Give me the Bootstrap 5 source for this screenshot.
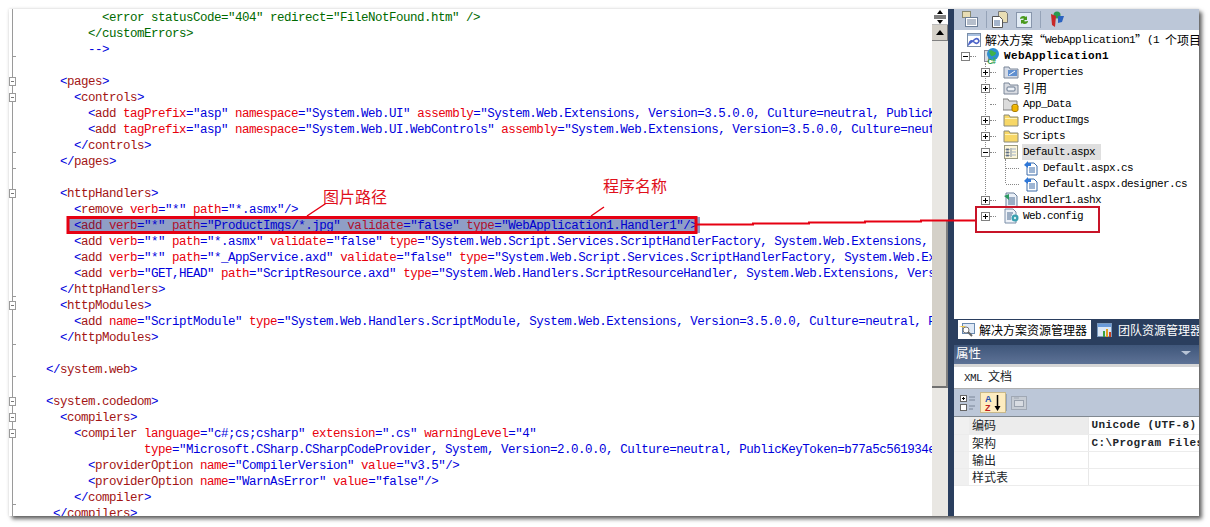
<!DOCTYPE html>
<html lang="zh"><head><meta charset="utf-8"><title>Web.config</title>
<link href="https://cdn.jsdelivr.net/npm/bootstrap@5.3.0/dist/css/bootstrap.min.css" rel="stylesheet">
<style>
html,body{background:#fff;overflow:hidden;height:527px}
.stage{position:relative;width:1210px;height:527px;padding:9px 0 0 9px}
.win{width:1190px;height:507px;background:#fff;box-shadow:3px 3px 4px rgba(0,0,0,.6),0 0 3px rgba(0,0,0,.15)}
.gut{width:9px;flex:none;background:linear-gradient(#9a9a9a,#9a9a9a) 3px 0/1px 100% no-repeat}
.gc{height:16px;display:flex;align-items:center}
.gc.tick{align-items:flex-end}
.gc.tick::after{content:"";width:4px;height:1px;background:#9a9a9a;margin-left:3px}
.gc.box::after{content:"";width:7px;height:9px;margin-left:0;border:1px solid #9a9a9a;background:linear-gradient(#777,#777) center/3px 1px no-repeat #fff}
.code{flex:1 1 0;min-width:0;overflow:hidden;font-family:"Liberation Mono",monospace;font-size:12.5px;letter-spacing:-.5px;color:#0000dc}
.cl{height:16px;line-height:18px;white-space:pre}
.tn{color:#a31515}.an{color:#e8000c}
.cmt,.cmt .tn,.cmt .an{color:#006a00}
.seltext{display:inline-block;height:16px;background:#8f9ec6;box-shadow:-5px 0 0 #8f9ec6,3px 0 0 #8f9ec6;color:#0000d0}
.seltext .an{color:#b0102c}.seltext .tn{color:#8c1030}
.sbar{width:16px;flex:none;background:#e9e7e3}
.sbar-split{height:16px;background:#fff;border-bottom:1px solid #bbb}
.sbar-up{height:16px;background:#d4d0c8;border-right:1px solid #808080;border-bottom:1px solid #808080}
.sbar-gap{height:179px}
.sbar-thumb{height:168px;background:#d4d0c8;border-right:2px solid #808080;border-bottom:2px solid #707070}
.vsplit{width:6px;flex:none;background:#2a3e5e}
.side{width:245px;flex:none;min-width:0;overflow:hidden}
.tbar{background:#bcc7d8}
.tbar-top{height:21px;gap:0}
.tsep{width:1px;height:17px;background:#95a3b8;flex:none}
.tree{position:relative;height:289px;padding-top:2px;background:#fff;overflow:hidden;font-family:"Liberation Mono",monospace;font-size:11px;letter-spacing:-.6px;color:#000}
.tr{height:16px;white-space:pre}
.tr>*{flex:none}
.l0{padding-left:12px}.l1{padding-left:7px}.l2{padding-left:27px}.l3{padding-left:52px}
.exp{width:9px;height:9px;flex:none;border:1px solid #808080;background:#fff;position:relative}
.exp::before{content:"";position:absolute;left:1px;top:3px;width:5px;height:1px;background:#000}
.exp.plus::after{content:"";position:absolute;left:3px;top:1px;width:1px;height:5px;background:#000}
.nox{width:9px;flex:none}
.dh{width:6px;flex:none;border-top:1px dotted #888}
.dh.long{width:13px}
.mr-3px{margin-right:3px}.mr-4px{margin-right:4px}.mr-7px{margin-right:7px}.mr-8px{margin-right:8px}
.dv{position:absolute;width:0;border-left:1px dotted #888}
.dv1{left:31px;top:33px;height:144px}
.dv2{left:51px;top:129px;height:24px}
.zh{font-family:"Noto Sans CJK SC",sans-serif;letter-spacing:0;font-size:12px}
.wordb{font-weight:700;letter-spacing:.4px}
.hilite{background:#dfdfdf;padding:0 6px 0 1px;margin-left:-1px;line-height:16px}
.tabstrip{height:26px;background:#2a3e5e;padding:1px 0 6px 4px;overflow:hidden;white-space:nowrap}
.tb-a{width:133px;background:#fff;flex:none;color:#000;padding-left:1px}
.tb-b{flex:none;color:#fff;padding-left:6px}
.tb-a svg,.tb-b svg{margin-right:4px;flex:none}
.tb-b svg{margin-right:5px}
.tb-a,.tb-b{font-family:"Noto Sans CJK SC",sans-serif;font-size:12px;line-height:19px}
.phead{height:19px;background:linear-gradient(#3f567a,#5d7296);color:#fff;font-family:"Noto Sans CJK SC",sans-serif;font-size:12.5px;line-height:18px;padding:0 8px 3px 2px}
.tridown{width:0;height:0;border-left:5px solid transparent;border-right:5px solid transparent;border-top:4px solid #b8c4d6}
.combo{height:25px;background:#fff;border-top:3px solid #d6d6d6;border-bottom:1px solid #b0b0b0;padding-left:10px;font-family:"Liberation Mono",monospace;font-size:11px;letter-spacing:-.6px;line-height:18px}
.tbar-p{height:28px;padding-left:6px;border-bottom:1px solid #808890}
.azbox{width:26px;height:21px;background:#fdecc0;border:1px solid #c9b98a;margin:0 0 0 4px}
.pgrid{width:245px;table-layout:fixed;margin:0;border-collapse:collapse}
.pgrid td{height:17px;padding:0;line-height:16px;vertical-align:top;border-bottom:1px solid #ececec;overflow:hidden;white-space:nowrap}
.pg-g{width:15px;background:#f0f0f0}
.pg-n{width:119px;padding-left:3px!important;font-family:"Noto Sans CJK SC",sans-serif;font-size:12px;border-right:1px solid #e8e8e8}
.pg-v{padding-left:3px!important;font-family:"Liberation Mono",monospace;font-size:11px;letter-spacing:.4px;font-weight:700}
.pg-sel{background:#ececec}
.over{position:absolute;left:0;top:0;pointer-events:none}
.note{position:absolute;color:#e0101c;font-family:"Noto Sans CJK SC",sans-serif;font-size:16px;line-height:20px}
.n1{left:323px;top:186px}.n2{left:603px;top:175px}
</style></head>
<body>
<svg class="d-none" xmlns="http://www.w3.org/2000/svg">
<symbol id="i-folder" viewBox="0 0 16 16"><path d="M1 3h5l1 2h8v9H1z" fill="#f7d766" stroke="#8a8a7a"/><path d="M2 6h12v1H2z" fill="#fff3b8"/></symbol>
<symbol id="i-prop" viewBox="0 0 16 16"><path d="M1 3h5l1 2h8v9H1z" fill="#d5dbe6" stroke="#7a8698"/><rect x="5" y="6" width="9" height="6" fill="#5f8fd0"/><path d="M6 11l6-4" stroke="#fff"/></symbol>
<symbol id="i-ref" viewBox="0 0 16 16"><path d="M1 3h5l1 2h8v9H1z" fill="#d9dce2" stroke="#7a8698"/><rect x="4" y="7" width="8" height="4" rx="1" fill="#eef2f8" stroke="#6a7a90"/></symbol>
<symbol id="i-data" viewBox="0 0 16 16"><path d="M0 3h5l1 2h8v9H0z" fill="#dcdcdc" stroke="#808080"/><ellipse cx="12" cy="10" rx="3" ry="1.6" fill="#f5c518" stroke="#a87b00"/><path d="M9 10v4c0 2 6 2 6 0v-4" fill="#f0b400" stroke="#a87b00"/></symbol>
<symbol id="i-aspx" viewBox="0 0 16 16"><rect x="1.500" y="1.500" width="13" height="13" fill="#fdf6d8" stroke="#9a9a80"/><path d="M3 5h3v1H3zM3 8h3v1H3zM3 11h3v1H3zM8 4v9" stroke="#7a8aa0"/><path d="M9 5h4M9 8h4M9 11h4" stroke="#9fb0c8"/></symbol>
<symbol id="i-cs" viewBox="0 0 16 16"><path d="M4 3h7l3 3v9H4z" fill="#fff" stroke="#3a6aa8"/><path d="M6 8h6M6 10h6M6 12h6" stroke="#3a6aa8"/><path d="M1 5l4-4v2h3v3H5v2z" fill="#2f78d8"/></symbol>
<symbol id="i-ashx" viewBox="0 0 16 16"><path d="M3 1h8l3 3v11H3z" fill="#eaf0f8" stroke="#6a7f9a"/><path d="M5 6h7M5 8h7M5 10h7M5 12h7" stroke="#4a6a90"/><path d="M1 4l5-2v6z" fill="#2a9a60"/></symbol>
<symbol id="i-cfg" viewBox="0 0 16 16"><path d="M2 1h8l3 3v11H2z" fill="#eef2f8" stroke="#7a8ea8"/><path d="M4 5h6M4 7h5M4 9h4M4 11h4" stroke="#4a6a90"/><circle cx="12" cy="10" r="3.500" fill="#3aa0b0"/><circle cx="12" cy="10" r="1.200" fill="#d5f0f0"/></symbol>
<symbol id="i-sol" viewBox="0 0 16 16"><rect x="1.500" y="1.500" width="13" height="13" fill="#fff" stroke="#7a8ea8"/><path d="M2 2h12v2H2z" fill="#a8c0e0"/><path d="M3 12c1-4 3-4 5-2s4 2 5-1c-1-3-3-3-5-1s-4 3-5 4z" fill="none" stroke="#4a62c8" stroke-width="1.600"/></symbol>
<symbol id="i-proj" viewBox="0 0 16 16"><rect x="0.500" y="2.500" width="4" height="11" fill="#d8dce2" stroke="#889"/><circle cx="9" cy="6" r="6" fill="#2e8fd0"/><path d="M5 3c3-2 4 1 6 1s1 3-2 4-3-3-4-5zM9 10c2-1 3 0 2 2" fill="#3fb24a"/><text x="3.500" y="15.500" font-family="Liberation Sans" font-size="7" font-weight="700" fill="#1a9a40">C#</text></symbol>
</svg>
<div class="stage">
 <div class="win d-flex">
  <div class="gut d-flex flex-column flex-none">
   <div class="gc"></div><div class="gc"></div><div class="gc tick"></div><div class="gc"></div>
   <div class="gc box"></div><div class="gc box"></div><div class="gc"></div><div class="gc"></div>
   <div class="gc tick"></div><div class="gc tick"></div><div class="gc"></div><div class="gc box"></div>
   <div class="gc"></div><div class="gc"></div><div class="gc"></div><div class="gc"></div>
   <div class="gc"></div><div class="gc tick"></div><div class="gc box"></div><div class="gc"></div>
   <div class="gc tick"></div><div class="gc"></div><div class="gc tick"></div><div class="gc"></div>
   <div class="gc box"></div><div class="gc box"></div><div class="gc box"></div><div class="gc"></div>
   <div class="gc"></div><div class="gc"></div><div class="gc tick"></div>
  </div>
  <div class="code">
<div class="cl cmt">            &lt;error statusCode="404" redirect="FileNotFound.htm" /&gt;</div>
<div class="cl cmt">          &lt;/customErrors&gt;</div>
<div class="cl">          --&gt;</div>
<div class="cl"></div>
<div class="cl">      &lt;<span class="tn">pages</span>&gt;</div>
<div class="cl">        &lt;<span class="tn">controls</span>&gt;</div>
<div class="cl">          &lt;<span class="tn">add</span> <span class="an">tagPrefix</span>="asp" <span class="an">namespace</span>="System.Web.UI" <span class="an">assembly</span>="System.Web.Extensions, Version=3.5.0.0, Culture=neutral, PublicK</div>
<div class="cl">          &lt;<span class="tn">add</span> <span class="an">tagPrefix</span>="asp" <span class="an">namespace</span>="System.Web.UI.WebControls" <span class="an">assembly</span>="System.Web.Extensions, Version=3.5.0.0, Culture=neut</div>
<div class="cl">        &lt;/<span class="tn">controls</span>&gt;</div>
<div class="cl">      &lt;/<span class="tn">pages</span>&gt;</div>
<div class="cl"></div>
<div class="cl">      &lt;<span class="tn">httpHandlers</span>&gt;</div>
<div class="cl">        &lt;<span class="tn">remove</span> <span class="an">verb</span>="*" <span class="an">path</span>="*.asmx"/&gt;</div>
<div class="cl">        <span class="seltext">&lt;<span class="tn">add</span> <span class="an">verb</span>="*" <span class="an">path</span>="ProductImgs/*.jpg" <span class="an">validate</span>="false" <span class="an">type</span>="WebApplication1.Handler1"/&gt;</span></div>
<div class="cl">        &lt;<span class="tn">add</span> <span class="an">verb</span>="*" <span class="an">path</span>="*.asmx" <span class="an">validate</span>="false" <span class="an">type</span>="System.Web.Script.Services.ScriptHandlerFactory, System.Web.Extensions, </div>
<div class="cl">        &lt;<span class="tn">add</span> <span class="an">verb</span>="*" <span class="an">path</span>="*_AppService.axd" <span class="an">validate</span>="false" <span class="an">type</span>="System.Web.Script.Services.ScriptHandlerFactory, System.Web.Ex</div>
<div class="cl">        &lt;<span class="tn">add</span> <span class="an">verb</span>="GET,HEAD" <span class="an">path</span>="ScriptResource.axd" <span class="an">type</span>="System.Web.Handlers.ScriptResourceHandler, System.Web.Extensions, Vers</div>
<div class="cl">      &lt;/<span class="tn">httpHandlers</span>&gt;</div>
<div class="cl">      &lt;<span class="tn">httpModules</span>&gt;</div>
<div class="cl">        &lt;<span class="tn">add</span> <span class="an">name</span>="ScriptModule" <span class="an">type</span>="System.Web.Handlers.ScriptModule, System.Web.Extensions, Version=3.5.0.0, Culture=neutral, P</div>
<div class="cl">      &lt;/<span class="tn">httpModules</span>&gt;</div>
<div class="cl"></div>
<div class="cl">    &lt;/<span class="tn">system.web</span>&gt;</div>
<div class="cl"></div>
<div class="cl">    &lt;<span class="tn">system.codedom</span>&gt;</div>
<div class="cl">      &lt;<span class="tn">compilers</span>&gt;</div>
<div class="cl">        &lt;<span class="tn">compiler</span> <span class="an">language</span>="c#;cs;csharp" <span class="an">extension</span>=".cs" <span class="an">warningLevel</span>="4"</div>
<div class="cl">                  <span class="an">type</span>="Microsoft.CSharp.CSharpCodeProvider, System, Version=2.0.0.0, Culture=neutral, PublicKeyToken=b77a5c561934e</div>
<div class="cl">          &lt;<span class="tn">providerOption</span> <span class="an">name</span>="CompilerVersion" <span class="an">value</span>="v3.5"/&gt;</div>
<div class="cl">          &lt;<span class="tn">providerOption</span> <span class="an">name</span>="WarnAsError" <span class="an">value</span>="false"/&gt;</div>
<div class="cl">        &lt;/<span class="tn">compiler</span>&gt;</div>
<div class="cl">     &lt;/<span class="tn">compilers</span>&gt;</div>
  </div>
  <div class="sbar d-flex flex-column">
   <div class="sbar-split d-flex align-items-center justify-content-center"><svg width="12" height="14" viewBox="0 0 12 14"><path d="M6 0L3 4h6zM6 14l-3-4h6z" fill="#000"/><path d="M0 6h12M0 8h12" stroke="#000"/></svg></div>
   <div class="sbar-up d-flex align-items-center justify-content-center"><svg width="8" height="5" viewBox="0 0 8 5"><path d="M4 0L0 5h8z" fill="#000"/></svg></div>
   <div class="sbar-gap"></div>
   <div class="sbar-thumb"></div>
  </div>
  <div class="vsplit"></div>
  <div class="side d-flex flex-column">
   <div class="tbar tbar-top d-flex align-items-center">
    <svg class="ms-2" width="16" height="17" viewBox="0 0 16 17"><rect x=".5" y=".5" width="8" height="6" fill="#e8ddb4" stroke="#8a8a70"/><rect x="3.500" y="6.500" width="12" height="9" fill="#fff" stroke="#6d7f98"/><path d="M5 9h9M5 11h9M5 13h9" stroke="#6d7f98"/></svg>
    <div class="tsep ms-2"></div>
    <svg class="ms-1" width="17" height="17" viewBox="0 0 17 17"><path d="M7.500.5h7l2 2v9h-9z" fill="#e8ddb4" stroke="#777"/><path d="M1.500 5.500h7l3 3v8h-10z" fill="#fff" stroke="#555"/><path d="M3 10h6M3 12h6M3 14h6" stroke="#4a6a98"/></svg>
    <svg class="ms-2" width="16" height="17" viewBox="0 0 16 17"><rect x=".5" y="1.500" width="15" height="15" fill="#e3ecf6" stroke="#8896ac"/><path d="M4 8c0-3 4-4 6-2l1-1v4H7l1-1c-1-1-3 0-4 0zM12 10c0 3-4 4-6 2l-1 1V9h4l-1 1c1 1 3 0 4 0z" fill="#4a9a1e"/></svg>
    <div class="tsep ms-2"></div>
    <svg class="ms-2" width="16" height="17" viewBox="0 0 16 17"><circle cx="8" cy="4" r="3.500" fill="#2a9a50"/><path d="M2 3l5 2-1 11-3-2z" fill="#c82828"/><path d="M9 5l6 0-2 6-4 1z" fill="#2a62c0"/></svg>
   </div>
   <div class="tree">
    <span class="dv dv1"></span><span class="dv dv2"></span>
    <div class="tr l0 d-flex align-items-center"><svg class="mr-3px" width="16" height="16"><use href="#i-sol"/></svg><span class="zh">解决方案“</span><span>WebApplication1</span><span class="zh">”</span><span>(1 </span><span class="zh">个项目</span></div>
    <div class="tr l1 d-flex align-items-center"><span class="exp"></span><span class="dh mr-8px"></span><svg class="mr-4px" width="16" height="16"><use href="#i-proj"/></svg><span class="wordb">WebApplication1</span></div>
    <div class="tr l2 d-flex align-items-center"><span class="exp plus"></span><span class="dh mr-7px"></span><svg class="mr-4px" width="16" height="16"><use href="#i-prop"/></svg><span>Properties</span></div>
    <div class="tr l2 d-flex align-items-center"><span class="exp plus"></span><span class="dh mr-7px"></span><svg class="mr-4px" width="16" height="16"><use href="#i-ref"/></svg><span class="zh">引用</span></div>
    <div class="tr l2 d-flex align-items-center"><span class="nox"></span><span class="dh mr-7px"></span><svg class="mr-4px" width="16" height="16"><use href="#i-data"/></svg><span>App_Data</span></div>
    <div class="tr l2 d-flex align-items-center"><span class="exp plus"></span><span class="dh mr-7px"></span><svg class="mr-4px" width="16" height="16"><use href="#i-folder"/></svg><span>ProductImgs</span></div>
    <div class="tr l2 d-flex align-items-center"><span class="exp plus"></span><span class="dh mr-7px"></span><svg class="mr-4px" width="16" height="16"><use href="#i-folder"/></svg><span>Scripts</span></div>
    <div class="tr l2 d-flex align-items-center"><span class="exp"></span><span class="dh mr-7px"></span><svg class="mr-4px" width="16" height="16"><use href="#i-aspx"/></svg><span class="hilite">Default.aspx</span></div>
    <div class="tr l3 d-flex align-items-center"><span class="dh long mr-4px"></span><svg class="mr-4px" width="16" height="16"><use href="#i-cs"/></svg><span>Default.aspx.cs</span></div>
    <div class="tr l3 d-flex align-items-center"><span class="dh long mr-4px"></span><svg class="mr-4px" width="16" height="16"><use href="#i-cs"/></svg><span>Default.aspx.designer.cs</span></div>
    <div class="tr l2 d-flex align-items-center"><span class="exp plus"></span><span class="dh mr-7px"></span><svg class="mr-4px" width="16" height="16"><use href="#i-ashx"/></svg><span>Handler1.ashx</span></div>
    <div class="tr l2 d-flex align-items-center"><span class="exp plus"></span><span class="dh mr-7px"></span><svg class="mr-4px" width="16" height="16"><use href="#i-cfg"/></svg><span>Web.config</span></div>
   </div>
   <div class="tabstrip d-flex">
    <div class="tb-a d-flex align-items-center"><svg width="16" height="16" viewBox="0 0 16 16"><rect x="3.500" y="1.500" width="12" height="10" fill="#dfe9f6" stroke="#6a8ab0"/><path d="M0 4h6l1 2H5z" fill="#f0c850"/><circle cx="7" cy="8" r="3" fill="#fff" stroke="#777"/><path d="M9 10l4 4" stroke="#666" stroke-width="2"/></svg><span>解决方案资源管理器</span></div>
    <div class="tb-b d-flex align-items-center"><svg width="16" height="16" viewBox="0 0 16 16"><rect x=".5" y="1.500" width="14" height="13" fill="#dce8f6" stroke="#7a9ac0"/><path d="M1 2h13v3H1z" fill="#6a9ad8"/><path d="M6 9h2v6H6z" fill="#3aa040"/><path d="M9 7h2v8H9z" fill="#e0a020"/><path d="M12 10h2v5h-2z" fill="#c84020"/></svg><span>团队资源管理器</span></div>
   </div>
   <div class="phead d-flex align-items-center justify-content-between"><span>属性</span><span class="tridown"></span></div>
   <div class="combo">XML <span class="zh">文档</span></div>
   <div class="tbar tbar-p d-flex align-items-center">
    <svg width="16" height="18" viewBox="0 0 16 18"><rect x=".5" y="1.500" width="6" height="6" fill="#fff" stroke="#666"/><path d="M2 4.500h3M3.500 3v3M2 13.500h3M3.500 12v3" stroke="#000"/><rect x=".5" y="10.500" width="6" height="6" fill="#fff" stroke="#666"/><path d="M9 3h6M9 6h6M9 12h6M9 15h4" stroke="#7a8698"/></svg>
    <div class="azbox d-flex align-items-center justify-content-center"><svg width="20" height="18" viewBox="0 0 20 18"><text x="2" y="8" font-family="Liberation Sans" font-size="9" font-weight="700" fill="#1f4fb0">A</text><text x="2" y="17" font-family="Liberation Sans" font-size="9" font-weight="700" fill="#c02020">Z</text><path d="M14.500 1v13" stroke="#000" stroke-width="1.500"/><path d="M11.500 12h6l-3 5z" fill="#000"/></svg></div>
    <div class="tsep"></div>
    <svg class="ms-1" width="16" height="16" viewBox="0 0 16 16"><rect x=".5" y="1.500" width="15" height="13" fill="#c6ccd4" stroke="#a0a8b4"/><rect x="3.500" y="5.500" width="9" height="6" fill="#d8dce2" stroke="#9aa2ae"/><path d="M3 3h5" stroke="#a0a8b4"/></svg>
   </div>
   <table class="pgrid">
    <tr><td class="pg-g"></td><td class="pg-n pg-sel">编码</td><td class="pg-v">Unicode (UTF-8)</td></tr>
    <tr><td class="pg-g"></td><td class="pg-n">架构</td><td class="pg-v">C:\Program Files</td></tr>
    <tr><td class="pg-g"></td><td class="pg-n">输出</td><td class="pg-v"></td></tr>
    <tr><td class="pg-g"></td><td class="pg-n">样式表</td><td class="pg-v"></td></tr>
   </table>
  </div>
 </div>
 <svg class="over" width="1210" height="527" viewBox="0 0 1210 527" fill="none">
  <rect x="68" y="217.500" width="628" height="15" stroke="#e60012" stroke-width="3"/>
  <path d="M697 224.500h56v-1h56v-1h56v-1h56v-1h54" stroke="#e60012" stroke-width="2"/>
  <path d="M307 216l18-12M591 216l13-9" stroke="#e60012" stroke-width="1.500"/>
  <rect x="976" y="207" width="123" height="25" stroke="#c81428" stroke-width="2"/>
 </svg>
 <span class="note n1">图片路径</span>
 <span class="note n2">程序名称</span>
</div>
<script src="https://cdn.jsdelivr.net/npm/bootstrap@5.3.0/dist/js/bootstrap.bundle.min.js"></script>
</body></html>
